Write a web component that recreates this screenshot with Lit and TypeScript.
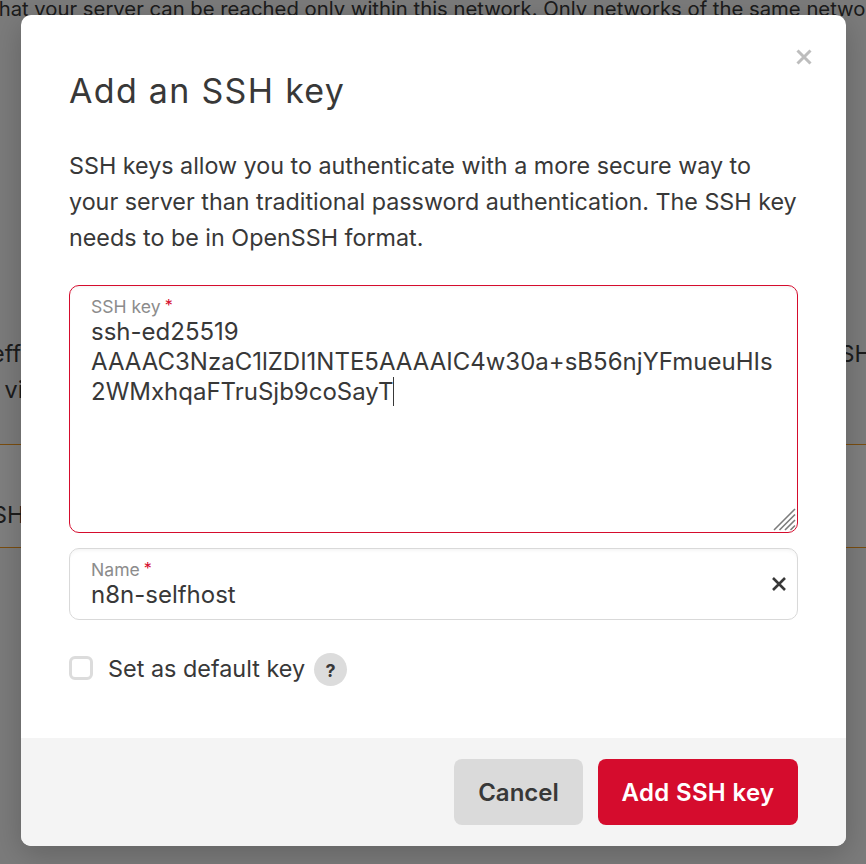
import { LitElement, html, css } from "lit";
import { customElement } from "lit/decorators.js";

@customElement("app-root")
export class AppRoot extends LitElement {
  static styles = css`
    :host { display: block; width: 866px; height: 864px; overflow: hidden; font-family: Inter, "Noto Sans", sans-serif; color: #383838; }
    .page { position: relative; width: 866px; height: 864px; overflow: hidden; background: #f6f6f6; }
    .under { display: flex; flex-direction: column; width: 866px; font-size: 23.4px; color: #383838; white-space: nowrap; }
    .top { height: 14px; font-size: 20.3px; line-height: 18px; margin-left: -8px; }
    .mid { margin-top: 322px; height: 108px; display: flex; flex-direction: column; border-bottom: 1px solid #f59a1f; }
    .row { height: 36px; line-height: 36px; display: flex; justify-content: space-between; }
    .first { margin: 0 -6px 0 -9px; }
    .second { margin-left: -2px; }
    .band { height: 102px; background: #fff; border-bottom: 1px solid #f59a1f; line-height: 140px; }
    .band span { margin-left: -8px; }
    .overlay { position: absolute; inset: 0; background: rgba(0,0,0,.5); }
    .modal { position: absolute; left: 21px; top: 15px; width: 825px; height: 831px; background: #fff; border-radius: 10px; overflow: hidden; display: flex; flex-direction: column; }
    .shadow { position: absolute; left: 21px; top: 15px; width: 825px; height: 831px; border-radius: 10px; box-shadow: 0 8px 30px rgba(0,0,0,.2); }
    .body { flex: 1; padding: 48px 48px 0; position: relative; }
    .close { position: absolute; right: 34px; top: 34px; width: 16px; height: 16px; display: block; }
    h2 { margin: 0; font-weight: 400; font-size: 34px; line-height: 56px; height: 56px; letter-spacing: 1.3px; }
    p { margin: 29px 0 0; font-size: 23.3px; line-height: 36px; }
    .field { position: relative; box-sizing: border-box; border: 1px solid #d9d9d9; border-radius: 10px; padding: 9px 21px 0; box-shadow: inset 0 3px 4px -2px rgba(0,0,0,.06); }
    .key { margin-top: 29px; height: 248px; border-color: #d50c2d; }
    .name { margin-top: 15px; height: 72px; }
    .label { font-size: 17.6px; line-height: 20px; color: #8c8c8c; }
    .name .label { line-height: 21px; }
    .star { color: #d50c2d; font-size: 16px; vertical-align: 2px; margin-left: -1px; }
    .value { font-size: 24px; line-height: 30px; color: #383838; white-space: pre-wrap; overflow-wrap: break-word; }
    .caret { display: inline-block; width: 1px; height: 29px; background: #383838; vertical-align: -6px; margin-left: -1px; }
    .resize { position: absolute; right: 0; bottom: 1px; width: 24px; height: 24px; display: block; }
    .clear { position: absolute; right: 10px; top: 27px; width: 16px; height: 16px; display: block; }
    .check { margin-top: 33px; display: flex; align-items: center; height: 33px; }
    .box { box-sizing: border-box; width: 24px; height: 24px; border: 3px solid #dcdcdc; border-radius: 6px; background: #fff; margin-top: -3px; }
    .check-label { margin-left: 15px; font-size: 23.4px; margin-top: -2px; }
    .help { margin-left: 9px; width: 33px; height: 33px; border-radius: 50%; background: #dcdcdc; display: flex; align-items: center; justify-content: center; font-size: 18px; font-weight: 700; padding-top: 2px; box-sizing: border-box; }
    .footer { height: 108px; box-sizing: border-box; background: #f4f4f4; padding: 21px 48px; display: flex; justify-content: flex-end; gap: 15px; }
    .btn { height: 66px; box-sizing: border-box; border: 0; border-radius: 8px; font-family: inherit; font-size: 24px; font-weight: 600; display: flex; align-items: center; justify-content: center; padding: 0; }
    .cancel { width: 129px; background: #dadada; color: #383838; }
    .add { width: 200px; background: #d50c2d; color: #fff; letter-spacing: .35px; }
  `;

  render() {
    return html`
      <div class="page">
        <div class="under">
          <div class="top">that your server can be reached only within this network. Only networks of the same network</div>
          <div class="mid">
            <div class="row first"><span>eff</span><span>SSH</span></div>
            <div class="row second"><span>&nbsp;vi</span></div>
          </div>
          <div class="band"><span>SH</span></div>
        </div>
        <div class="overlay"></div>
        <div class="shadow"></div>
        <div class="modal">
          <div class="body">
            <svg class="close" viewBox="0 0 16 16"><path d="M1.5 1.5 14.5 14.5M14.5 1.5 1.5 14.5" stroke="#bdbdbd" stroke-width="3" fill="none"/></svg>
            <h2>Add an SSH key</h2>
            <p>SSH keys allow you to authenticate with a more secure way to your server than traditional password authentication. The SSH key needs to be in OpenSSH format.</p>
            <div class="field key">
              <div class="label">SSH key <span class="star">*</span></div>
              <div class="value">ssh-ed25519 AAAAC3NzaC1lZDI1NTE5AAAAIC4w30a+sB56njYFmueuHIs2WMxhqaFTruSjb9coSayT<span class="caret"></span></div>
              <svg class="resize" viewBox="0 0 24 24"><path d="M1 23 22 2M6.5 23 22 7.5M12 23 22 13M17.5 23 22 18.5" stroke="#7c7c7c" stroke-width="1.6" fill="none"/></svg>
            </div>
            <div class="field name">
              <div class="label">Name <span class="star">*</span></div>
              <div class="value">n8n-selfhost</div>
              <svg class="clear" viewBox="0 0 16 16"><path d="M2 2 14 14M14 2 2 14" stroke="#383838" stroke-width="2.6" fill="none"/></svg>
            </div>
            <div class="check">
              <span class="box"></span>
              <span class="check-label">Set as default key</span>
              <span class="help">?</span>
            </div>
          </div>
          <div class="footer">
            <button class="btn cancel">Cancel</button>
            <button class="btn add">Add SSH key</button>
          </div>
        </div>
      </div>
    `;
  }
}
